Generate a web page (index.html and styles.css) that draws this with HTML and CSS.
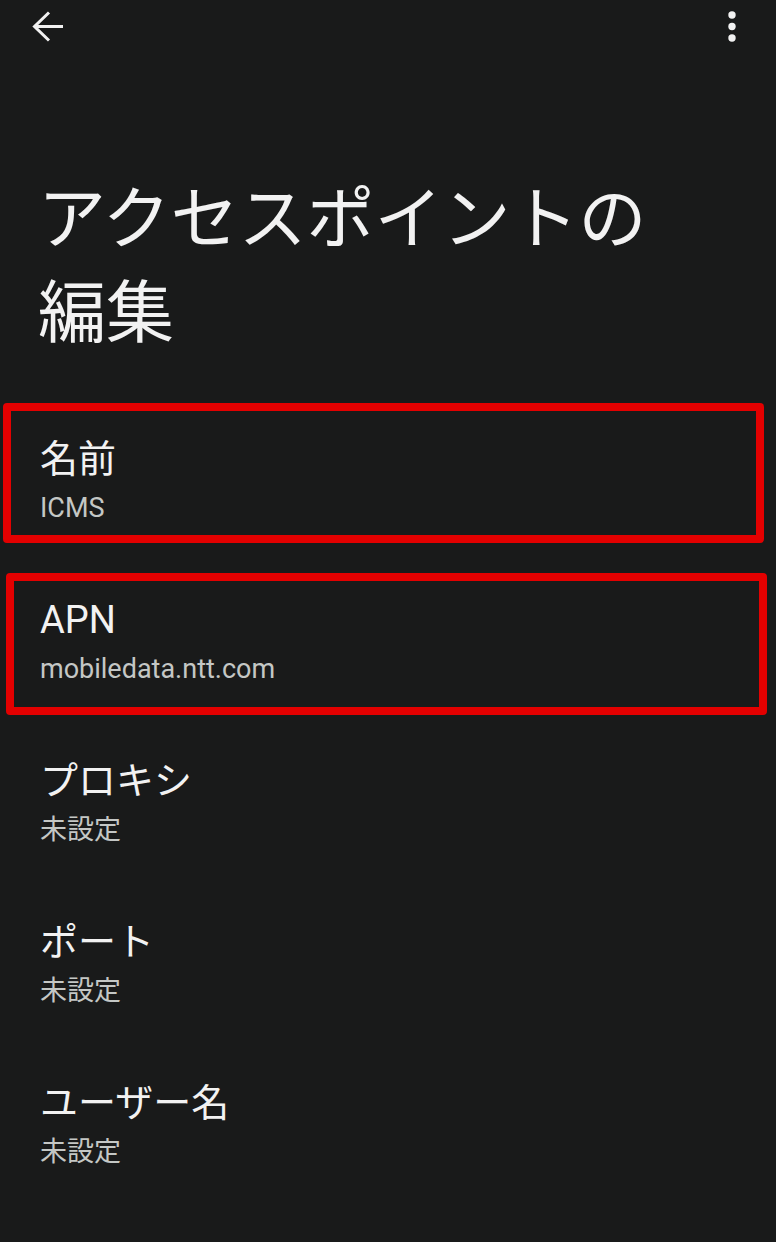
FILE: index.html
```html
<!DOCTYPE html>
<html lang="ja">
<head>
<meta charset="utf-8">
<title>アクセスポイントの編集</title>
<link rel="stylesheet" href="styles.css">
</head>
<body>
<div class="screen">
  <header class="topbar">
    <svg class="back" width="44" height="44" viewBox="0 0 44 44" aria-label="戻る">
      <path d="M37 22.5H9" fill="none" stroke="#f2f2f2" stroke-width="3"/>
      <path d="M23 8.5L8.5 22.5L23 36.5" fill="none" stroke="#f2f2f2" stroke-width="3" stroke-linejoin="miter"/>
    </svg>
    <svg class="more" width="20" height="40" viewBox="0 0 20 40" aria-label="その他">
      <circle cx="10" cy="8" r="3.7" fill="#f2f2f2"/>
      <circle cx="10" cy="19.5" r="3.7" fill="#f2f2f2"/>
      <circle cx="10" cy="31" r="3.7" fill="#f2f2f2"/>
    </svg>
  </header>

  <h1 class="heading">アクセスポイントの編集</h1>

  <ul class="prefs">
    <li class="pref">
      <div class="pref-title">名前</div>
      <div class="pref-summary">ICMS</div>
      <span class="mark mark-name"></span>
    </li>
    <li class="pref">
      <div class="pref-title">APN</div>
      <div class="pref-summary">mobiledata.ntt.com</div>
      <span class="mark mark-apn"></span>
    </li>
    <li class="pref">
      <div class="pref-title">プロキシ</div>
      <div class="pref-summary">未設定</div>
    </li>
    <li class="pref">
      <div class="pref-title">ポート</div>
      <div class="pref-summary">未設定</div>
    </li>
    <li class="pref">
      <div class="pref-title">ユーザー名</div>
      <div class="pref-summary">未設定</div>
    </li>
  </ul>
</div>
</body>
</html>
```

FILE: styles.css
```css
html, body {
  margin: 0;
  padding: 0;
  background: #191a1a;
}

body {
  font-family: Roboto, "Noto Sans CJK JP", sans-serif;
  color: #f2f2f2;
}

.screen {
  width: 776px;
  min-height: 1242px;
  background: #191a1a;
  overflow: hidden;
}

.topbar {
  height: 56px;
  display: flex;
  justify-content: space-between;
  align-items: flex-start;
  padding: 4px 34px 0 26px;
  box-sizing: border-box;
}

.back {
  display: block;
}

.more {
  display: block;
  margin-top: 3px;
}

.heading {
  margin: 111px 0 0;
  padding: 0 100px 0 38px;
  font-family: "Noto Sans CJK JP", sans-serif;
  font-size: 68px;
  font-weight: 400;
  line-height: 94px;
  color: #f2f2f2;
}

.prefs {
  list-style: none;
  margin: 45px 0 0;
  padding: 0;
}

.pref {
  position: relative;
  padding: 34px 38px 35px 40px;
}

.pref-title {
  font-size: 38px;
  line-height: 50px;
  color: #f2f2f2;
}

.pref-summary {
  margin-top: 6px;
  font-size: 27px;
  line-height: 36px;
  color: #c4c7c5;
}

.mark {
  position: absolute;
  border: 8px solid #e30000;
  border-radius: 4px;
  box-sizing: border-box;
  pointer-events: none;
}

.mark-name {
  top: 3px;
  left: 3px;
  width: 761px;
  height: 140px;
}

.mark-apn {
  top: 12px;
  left: 6px;
  width: 761px;
  height: 142px;
}
```
